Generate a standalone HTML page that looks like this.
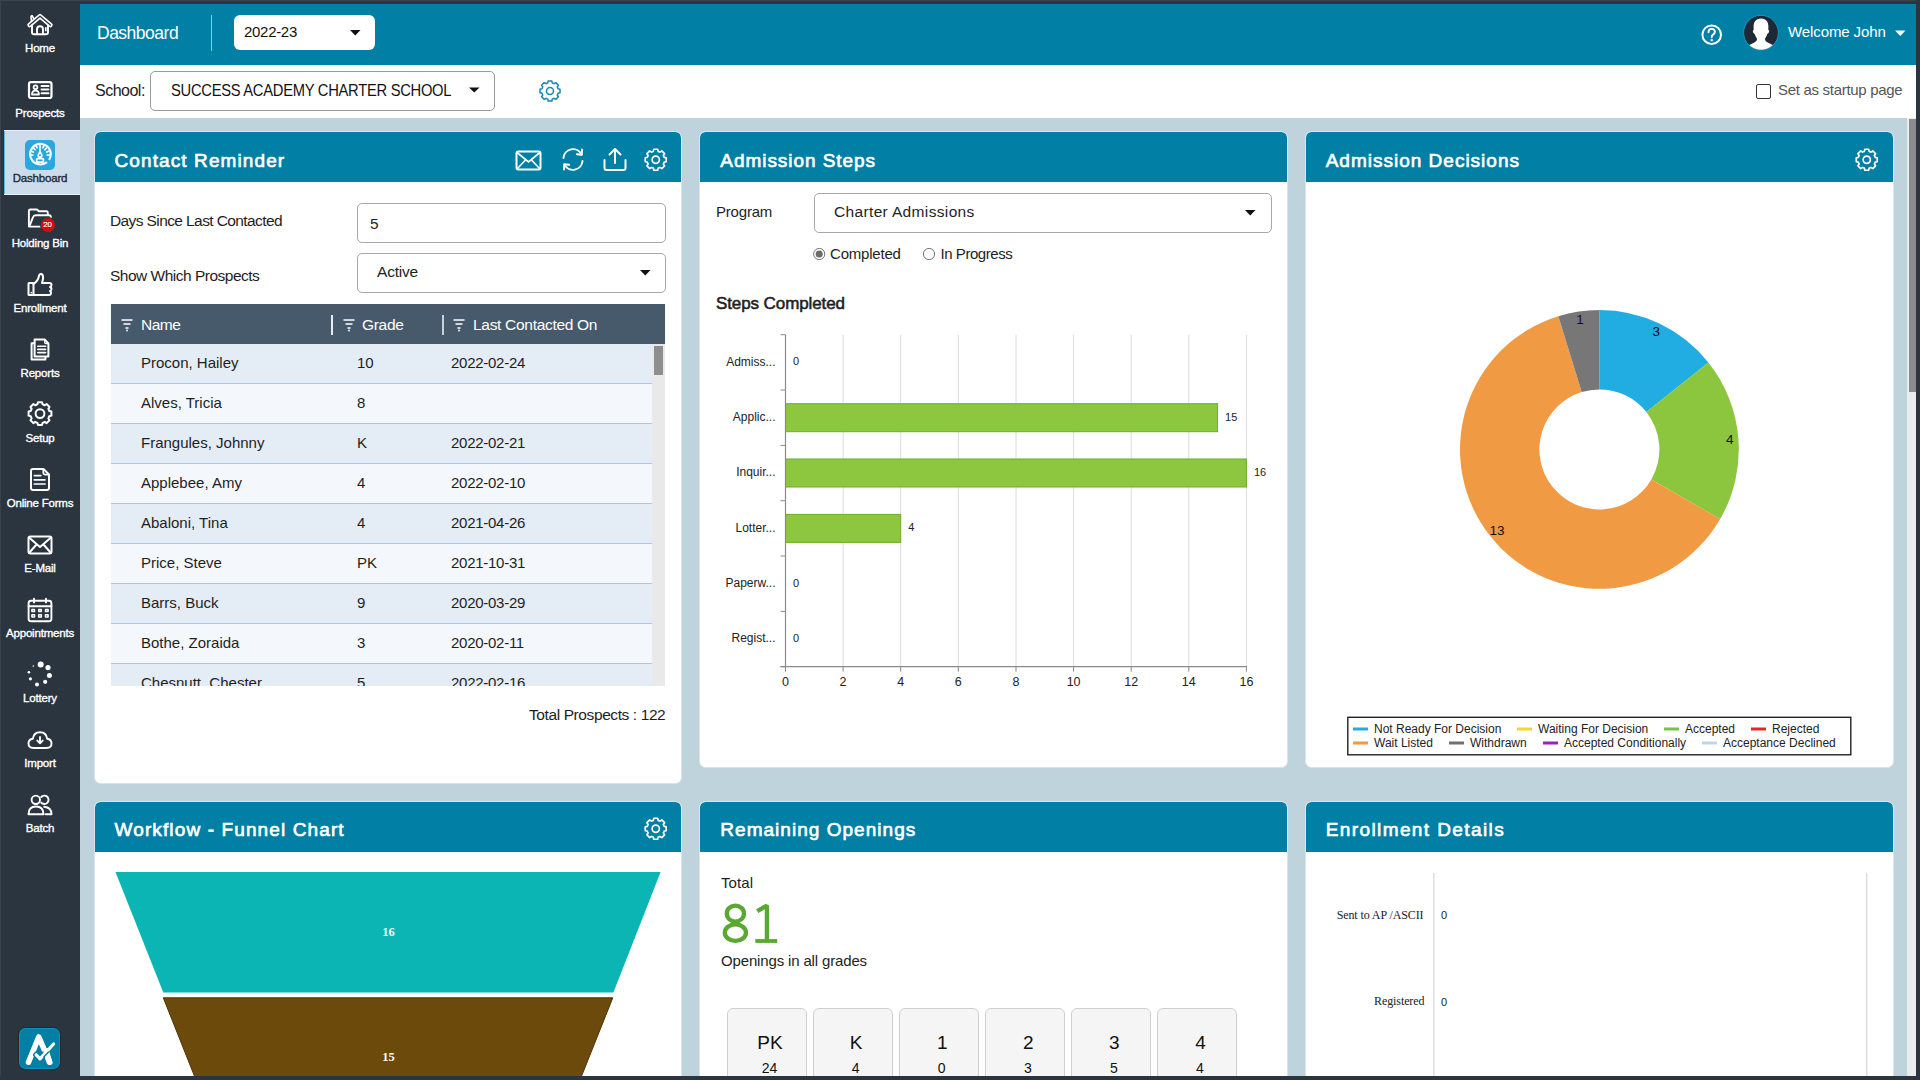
<!DOCTYPE html>
<html><head><meta charset="utf-8">
<style>
*{box-sizing:border-box;margin:0;padding:0}
html,body{width:1920px;height:1080px;overflow:hidden;background:#2a3540;font-family:"Liberation Sans",sans-serif;color:#222}
.abs{position:absolute}
#topstrip{left:0;top:0;width:1920px;height:1px;background:#3a434e}
#topbar{left:80px;top:4px;width:1836px;height:61px;background:#017fa4}
#whitebar{left:80px;top:65px;width:1836px;height:53px;background:#fff}
#content{left:80px;top:118px;width:1827px;height:958px;background:#bfd3dd}
#sbtrack{left:1907px;top:118px;width:9px;height:958px;background:#ebebeb}
#sbthumb{left:1909px;top:119px;width:7px;height:273px;background:#8c8c8c}
.panel{position:absolute;background:#fff;border-radius:6.5px;border:1.5px solid #dae4ea;overflow:hidden}
.ph{position:absolute;left:0;top:0;right:0;height:50px;background:#017fa4;border-radius:5px 5px 0 0}
.pt{position:absolute;left:20px;top:17.5px;color:#fff;font-weight:normal;-webkit-text-stroke:0.65px #fff;font-size:19px;letter-spacing:0.35px;white-space:nowrap}
.nav{position:absolute;left:0;width:80px;height:65px;color:#fff;text-align:center;font-size:11.5px;font-weight:normal;letter-spacing:-0.2px;-webkit-text-stroke:0.35px currentColor}
.nav .lbl{position:absolute;left:0;right:0;white-space:nowrap}
.nav svg{position:absolute;left:25px}
.txt{color:#1e1e1e;white-space:nowrap}
.row{position:absolute;left:0;width:554px;height:40px;border-bottom:1px solid #aac7e4;font-size:15px;color:#1e1e1e}
.row span{position:absolute;top:9.7px;white-space:nowrap}
.gbox{top:1008px;width:80px;height:90px;background:#f5f5f5;border:1.5px solid #cfcfcf;border-radius:6px}
.glbl{top:1032px;margin-left:3.5px;width:80px;text-align:center;font-size:19px;color:#111;white-space:nowrap}
.glbl,.gval{position:absolute}
.gval{top:1059.5px;margin-left:3px;width:80px;text-align:center;font-size:14px;color:#111;white-space:nowrap}
</style></head>
<body>
<div id="topstrip" class="abs"></div>
<div id="topbar" class="abs"></div>
<div id="whitebar" class="abs"></div>
<div id="content" class="abs"></div>
<div id="sbtrack" class="abs"></div>
<div id="sbthumb" class="abs"></div>



<!-- TOPBAR CONTENT -->
<div class="abs" style="left:97px;top:22.5px;color:#fff;font-size:17.5px;letter-spacing:-0.5px;white-space:nowrap">Dashboard</div>
<div class="abs" style="left:211px;top:15px;width:1px;height:36px;background:#8fc6d8"></div>
<div class="abs" style="left:234px;top:15px;width:141px;height:35px;background:#fff;border-radius:6px"></div>
<div class="abs" style="left:244px;top:23.3px;color:#111;font-size:15px;letter-spacing:-0.3px;white-space:nowrap">2022-23</div>
<svg class="abs" style="left:350px;top:30px" width="11" height="6" viewBox="0 0 11 6"><path d="M0 0 H10.5 L5.25 5.5 Z" fill="#111"/></svg>
<svg class="abs" style="left:1700px;top:23px" width="24" height="24" viewBox="0 0 24 24" fill="none" stroke="#fff" stroke-width="1.6"><circle cx="11.7" cy="11.7" r="9.3" stroke-width="2"/><path d="M8.5 9.2 Q8.5 5.9 11.7 5.9 Q14.9 5.9 14.9 8.8 Q14.9 10.6 13 11.6 Q11.7 12.3 11.7 14.2" stroke-linecap="round" stroke-width="1.9"/><rect x="10.6" y="16.2" width="2.2" height="2" fill="#fff" stroke="none"/></svg>
<svg class="abs" style="left:1742px;top:14px" width="38" height="38" viewBox="0 0 38 38"><defs><clipPath id="avc"><circle cx="19" cy="18.7" r="17"/></clipPath></defs><circle cx="19" cy="18.7" r="17.4" fill="#1f2935" stroke="#1298c8" stroke-width="1"/>
<path clip-path="url(#avc)" d="M19 4.6 C13.6 4.6 11.6 8.2 11.6 12.8 L11.7 15.8 Q10.6 16.2 11 18 Q11.5 19.6 12.7 19.9 Q13.4 22.6 14.9 24.4 L14.9 26 Q14.2 28 9.2 30 Q4 32 2 36 L2 40 H36 L36 36 Q34 32 28.8 30 Q23.8 28 23.1 26 L23.1 24.4 Q24.6 22.6 25.3 19.9 Q26.5 19.6 27 18 Q27.4 16.2 26.3 15.8 L26.4 12.8 C26.4 8.2 24.4 4.6 19 4.6 Z" fill="#fff"/></svg>
<div class="abs" style="left:1788px;top:23px;color:#fff;font-size:15px;letter-spacing:-0.1px;white-space:nowrap">Welcome John</div>
<svg class="abs" style="left:1895px;top:30px" width="11" height="7" viewBox="0 0 11 7"><path d="M0 0.5 H10.5 L5.25 6 Z" fill="#fff"/></svg>
<!-- WHITEBAR CONTENT -->
<div class="abs" style="left:95px;top:82px;color:#222;font-size:16px;letter-spacing:-0.5px;white-space:nowrap">School:</div>
<div class="abs" style="left:150px;top:71px;width:345px;height:40px;border:1px solid #9a9a9a;border-radius:5px;background:#fff"></div>
<div class="abs" style="left:171px;top:80.8px;color:#111;font-size:16.2px;letter-spacing:-0.3px;white-space:nowrap;transform:scaleX(0.91);transform-origin:0 0">SUCCESS ACADEMY CHARTER SCHOOL</div>
<svg class="abs" style="left:469px;top:87px" width="11" height="6" viewBox="0 0 11 6"><path d="M0 0.5 H10.5 L5.25 5.5 Z" fill="#111"/></svg>
<svg class="abs" style="left:538px;top:79px" width="24" height="24" viewBox="0 0 24 24" fill="none" stroke="#1a87b0" stroke-width="1.5" stroke-linejoin="round"><path d="M8.82 4.33 L9.71 4.02 L10.15 1.97 L13.85 1.97 L14.29 4.02 L15.18 4.33 L16.02 4.74 L17.78 3.60 L20.40 6.22 L19.26 7.98 L19.67 8.82 L19.98 9.71 L22.03 10.15 L22.03 13.85 L19.98 14.29 L19.67 15.18 L19.26 16.02 L20.40 17.78 L17.78 20.40 L16.02 19.26 L15.18 19.67 L14.29 19.98 L13.85 22.03 L10.15 22.03 L9.71 19.98 L8.82 19.67 L7.98 19.26 L6.22 20.40 L3.60 17.78 L4.74 16.02 L4.33 15.18 L4.02 14.29 L1.97 13.85 L1.97 10.15 L4.02 9.71 L4.33 8.82 L4.74 7.98 L3.60 6.22 L6.22 3.60 L7.98 4.74 Z"/><circle cx="12" cy="12" r="3.5"/></svg>
<div class="abs" style="left:1756px;top:84px;width:15px;height:15px;border:1.5px solid #333;border-radius:2px;background:#fff"></div>
<div class="abs" style="left:1778px;top:81px;color:#555;font-size:15px;letter-spacing:-0.3px;white-space:nowrap">Set as startup page</div>

<!-- SIDEBAR -->
<div class="abs" style="left:4px;top:130px;width:76px;height:65px;background:#cddcea"></div>
<div class="abs" style="left:4px;top:130px;width:1px;height:65px;background:#5fb5e0"></div>
<div class="abs" style="left:4px;top:130px;width:76px;height:1px;background:#e8f0f7"></div>
<div class="abs" style="left:4px;top:194px;width:76px;height:1px;background:#e8f0f7"></div>
<svg class="abs" style="left:0;top:0" width="80" height="1076" viewBox="0 0 80 1076" fill="none" stroke="#fff" stroke-width="2" stroke-linecap="round" stroke-linejoin="round">
 <!-- home 28..52, 15..35 -->
 <path d="M31.5 21.5 L31 16.8 Q31.2 15.6 32.3 15.8 L34 19.2" stroke-width="1.6"/>
 <path d="M29.6 25 L40 16.2 L50.4 25" stroke-width="4.6"/>
 <path d="M29.6 25 L40 16.2 L50.4 25" stroke="#2a3540" stroke-width="1.3"/>
 <path d="M32 25.5 V32.3 Q32 34.3 34 34.3 H46 Q48 34.3 48 32.3 V25.5" stroke-width="1.9"/>
 <path d="M37 34.3 V29.2 A3 3 0 0 1 43 29.2 V34.3" stroke-width="1.9"/>
 <path d="M45.8 27.8 V30.5" stroke-width="1.7"/>
 <!-- prospects card 28..52, 81..99 -->
 <rect x="29" y="82.2" width="22.5" height="15.8" rx="2" stroke-width="2.2"/>
 <circle cx="35.5" cy="87.2" r="1.9" stroke-width="1.8"/>
 <path d="M32 94.5 Q32 90.6 35.5 90.6 Q39 90.6 39 94.5 Z" stroke-width="1.8"/>
 <path d="M41.5 86 H48.5 M41.5 89.6 H48.5 M41.5 93.2 H48.5" stroke-width="2"/>
 <!-- holding bin folder -->
 <path d="M28.9 226.2 V211 Q28.9 209.5 30.4 209.5 H36.5 Q37.4 209.5 38 210.4 L38.6 211.3 H46.3 Q47.8 211.3 47.8 212.8 V214.8" stroke-width="1.9"/>
 <path d="M29.3 226.6 L32.9 217.3 Q33.7 215.3 35.8 215.3 H49.2 Q51 215.3 50.8 217.2 L50.4 219.5 M29.3 226.6 H41" stroke-width="1.9"/>
 <!-- enrollment thumb 27..52, 273..296 -->
 <rect x="28.5" y="283" width="5" height="12" rx="0.5"/>
 <circle cx="31.4" cy="292.6" r="0.9" fill="#fff" stroke="none"/>
 <path d="M33.5 284 Q38 281 39 276 Q39.5 273.5 41.5 274 Q43.5 275 43 279 L42 283 H49.5 Q51.5 283 51.5 285 Q51.5 286.5 50 287 Q51.5 287.5 51.5 289 Q51.5 290.5 50 291 Q51 291.5 51 293 Q51 295 49 295 H33.5"/>
 <!-- reports 29..51, 339..362 -->
 <path d="M33.5 343.3 H31.6 V359.4 H45.4 V357.4" stroke-width="2"/>
 <path d="M34.6 339.6 H44.8 L48.4 343.4 V356.4 H34.6 Z" stroke-width="2"/>
 <path d="M44.8 339.8 V342.6 Q44.8 343.6 45.8 343.6 H48.2" stroke-width="1.5"/>
 <path d="M37.8 346.3 H45.6 M37.8 349.4 H45.6 M37.8 352.6 H45.6" stroke-width="1.6"/>
 <!-- setup gear 27..52, 402..426 -->
 <!-- online forms 29..51, 468..491 -->
 <path d="M31 471 Q31 469 33 469 H43.5 L49 474.5 V488 Q49 490 47 490 H33 Q31 490 31 488 Z" stroke-width="2"/>
 <path d="M43.3 469.3 V472.5 Q43.3 474.6 45.4 474.6 H48.7" stroke-width="1.8"/>
 <path d="M34.3 475.6 H40.8 M34.3 479.8 H45 M34.3 484 H45" stroke-width="1.7"/>
 <!-- email 28..52, 536..554 -->
 <rect x="28.5" y="536.5" width="23" height="17" rx="2"/>
 <path d="M29 537.5 L40 547 L51 537.5 M29 553 L36.5 544.5 M51 553 L43.5 544.5"/>
 <!-- appointments 28..52, 599..622 -->
 <rect x="28.6" y="600.8" width="22.8" height="20.4" rx="2.5" stroke-width="1.9"/>
 <path d="M28.6 606.3 H51.4 M34 598.8 V602.6 M46 598.8 V602.6" stroke-width="1.9"/>
 <path d="M31.9 609.4 h2.6 v2.1 h-2.6 z M38.7 609.4 h2.6 v2.1 h-2.6 z M45.5 609.4 h2.6 v2.1 h-2.6 z M31.9 614.8 h2.6 v2.1 h-2.6 z M38.7 614.8 h2.6 v2.1 h-2.6 z M45.5 614.8 h2.6 v2.1 h-2.6 z" stroke-width="1.5"/>
 <!-- import cloud 27..52, 731..749 -->
 <path d="M33.5 748 Q28.5 748 28.5 743.5 Q28.5 739.3 32.8 738.8 Q33.8 732.3 40 732.3 Q46.2 732.3 47.2 738.8 Q51.5 739.3 51.5 743.5 Q51.5 748 46.5 748 Z" stroke-width="1.9"/>
 <path d="M40 737 V743.2 M37.3 740.6 L40 743.3 L42.7 740.6" stroke-width="1.9"/>
 <!-- batch 27..52, 795..815 -->
 <circle cx="35.8" cy="799.8" r="4.2" stroke-width="1.9"/>
 <path d="M41.2 797 A4.2 4.2 0 1 1 41.2 802.6" stroke-width="1.9"/>
 <path d="M28.5 814.2 Q28.5 806.5 36 806.5 Q43.5 806.5 43.5 814.2 Z" stroke-width="1.9"/>
 <path d="M44.2 806.8 Q51.5 807.5 51.5 814.2 H45.5" stroke-width="1.9"/>
</svg>
<!-- gear sidebar -->
<svg class="abs" style="left:0;top:0" width="80" height="440" viewBox="0 0 80 440" fill="none" stroke="#fff" stroke-width="2" stroke-linejoin="round"><path d="M36.33 404.73 L37.43 404.35 L37.96 402.18 L42.04 402.18 L42.57 404.35 L43.67 404.73 L44.72 405.24 L46.63 404.08 L49.52 406.97 L48.36 408.88 L48.87 409.93 L49.25 411.03 L51.42 411.56 L51.42 415.64 L49.25 416.17 L48.87 417.27 L48.36 418.32 L49.52 420.23 L46.63 423.12 L44.72 421.96 L43.67 422.47 L42.57 422.85 L42.04 425.02 L37.96 425.02 L37.43 422.85 L36.33 422.47 L35.28 421.96 L33.37 423.12 L30.48 420.23 L31.64 418.32 L31.13 417.27 L30.75 416.17 L28.58 415.64 L28.58 411.56 L30.75 411.03 L31.13 409.93 L31.64 408.88 L30.48 406.97 L33.37 404.08 L35.28 405.24 Z"/><circle cx="40" cy="413.6" r="4.4"/></svg>
<!-- dashboard active icon -->
<div class="abs" style="left:25px;top:140px;width:30px;height:30px;border-radius:5px;background:#29a8dd"></div>
<svg class="abs" style="left:25px;top:140px" width="30" height="30" viewBox="0 0 30 30" fill="none" stroke="#fff" stroke-width="1.8" stroke-linecap="round">
 <path d="M21.3 22.6 A10.3 10.3 0 1 1 24.4 19.2" stroke-width="2.1"/>
 <path d="M15 5.5 V8 M15 9.3 V10.3 M8.6 8.2 L10 9.6 M21.4 8.2 L20 9.6 M5.6 15 H7.8 M22.2 15 H24.4 M6.4 11.2 L8.3 12 M23.6 11.2 L21.7 12 M11.2 5.8 L12 7.6 M18.8 5.8 L18 7.6" stroke-width="1.7"/>
 <path d="M15 11.8 L13.2 15 Q13 17.2 15 17.2 Q17 17.2 16.8 15 Z" stroke-width="1.7"/>
 <rect x="11.6" y="18.6" width="6.8" height="3.6" rx="1" stroke-width="1.7"/>
</svg>
<!-- badge -->
<div class="abs" style="left:39.6px;top:217px;width:16px;height:16px;border-radius:50%;background:#d40c0c;border:1px solid #1d3a48;color:#fff;font-size:8px;font-weight:normal;-webkit-text-stroke:0.15px #fff;line-height:14px;text-align:center;letter-spacing:-0.2px">20</div>
<!-- lottery dots -->
<svg class="abs" style="left:26px;top:660px" width="28" height="28" viewBox="0 0 28 28" fill="#fff">
 <circle cx="14.7" cy="4.6" r="3.0"/><circle cx="22.0" cy="7.6" r="2.6"/><circle cx="23.4" cy="15.6" r="2.5"/><circle cx="19.2" cy="21.8" r="2.1"/><circle cx="11.0" cy="24.6" r="2.0"/><circle cx="4.4" cy="18.8" r="1.6"/><circle cx="2.9" cy="12.2" r="1.3"/><circle cx="7.3" cy="6.0" r="0.8"/>
</svg>
<div class="nav" style="top:0"><div class="lbl" style="top:41.7px">Home</div></div>
<div class="nav" style="top:65px"><div class="lbl" style="top:41.7px">Prospects</div></div>
<div class="nav" style="top:130px;color:#1f2a33"><div class="lbl" style="top:41.7px">Dashboard</div></div>
<div class="nav" style="top:195px"><div class="lbl" style="top:41.7px">Holding Bin</div></div>
<div class="nav" style="top:260px"><div class="lbl" style="top:41.7px">Enrollment</div></div>
<div class="nav" style="top:325px"><div class="lbl" style="top:41.7px">Reports</div></div>
<div class="nav" style="top:390px"><div class="lbl" style="top:41.7px">Setup</div></div>
<div class="nav" style="top:455px"><div class="lbl" style="top:41.7px">Online Forms</div></div>
<div class="nav" style="top:520px"><div class="lbl" style="top:41.7px">E-Mail</div></div>
<div class="nav" style="top:585px"><div class="lbl" style="top:41.7px">Appointments</div></div>
<div class="nav" style="top:650px"><div class="lbl" style="top:41.7px">Lottery</div></div>
<div class="nav" style="top:715px"><div class="lbl" style="top:41.7px">Import</div></div>
<div class="nav" style="top:780px"><div class="lbl" style="top:41.7px">Batch</div></div>
<!-- logo -->
<div class="abs" style="left:18.3px;top:1026.6px;width:42.6px;height:43.6px;border-radius:7.5px;background:#017fa4;border:1px solid #2a2227;box-shadow:inset 0 0 0 1px #0d93bd"></div>
<svg class="abs" style="left:18.3px;top:1026.6px" width="43" height="44" viewBox="0 0 43 44" fill="none" stroke-linecap="round" stroke-linejoin="round">
 <path d="M10.5 35.2 L20.8 10 L31.6 35.2" stroke="#fff" stroke-width="5.6"/>
 <path d="M18.2 27.8 L22 31.8 L35.6 17" stroke="#017fa4" stroke-width="6"/>
 <path d="M18.2 27.8 L22 31.8 L35.6 17" stroke="#fff" stroke-width="3.2"/>
 <path d="M28 23.5 L31.6 35.2" stroke="#fff" stroke-width="5.6"/>
 <path d="M30.5 25 L25.8 30" stroke="#017fa4" stroke-width="1.4"/>
</svg>

<!-- panels -->
<div class="panel" style="left:93.5px;top:131.3px;width:588.5px;height:652.6px"><div class="ph"><div class="pt" style="letter-spacing:1.1px">Contact Reminder</div></div></div>
<div class="panel" style="left:699.3px;top:131.3px;width:589px;height:636.5px"><div class="ph"><div class="pt" style="letter-spacing:0.95px">Admission Steps</div></div></div>
<div class="panel" style="left:1304.7px;top:131.3px;width:589px;height:636.5px"><div class="ph"><div class="pt" style="letter-spacing:1.0px">Admission Decisions</div></div></div>
<div class="panel" style="left:93.5px;top:801px;width:588.5px;height:400px"><div class="ph"><div class="pt" style="letter-spacing:1.12px;top:16.5px">Workflow - Funnel Chart</div></div></div>
<div class="panel" style="left:699.3px;top:801px;width:589px;height:400px"><div class="ph"><div class="pt" style="letter-spacing:1.03px;top:16.5px">Remaining Openings</div></div></div>
<div class="panel" style="left:1304.7px;top:801px;width:589px;height:400px"><div class="ph"><div class="pt" style="letter-spacing:1.4px;top:16.5px">Enrollment Details</div></div></div>


<!-- P1 BODY -->
<svg class="abs" style="left:515px;top:150px" width="27" height="21" viewBox="0 0 27 21" fill="none" stroke="#fff" stroke-width="2"><rect x="1.5" y="1.5" width="24" height="18" rx="2"/><path d="M2 2.5 L13.5 12 L25 2.5 M2 19 L10.5 10 M25 19 L16.5 10" stroke-width="1.7"/></svg>
<svg class="abs" style="left:560px;top:147px" width="26" height="25" viewBox="0 0 26 25" fill="none" stroke="#fff" stroke-width="1.9" stroke-linecap="round"><path d="M3.5 11 A9.5 9.5 0 0 1 21.5 7.5"/><path d="M22.5 14 A9.5 9.5 0 0 1 4.5 17.5"/><path d="M22 2.5 L21.8 7.8 L16.8 7.2" stroke-linejoin="round"/><path d="M4 22.5 L4.2 17.2 L9.2 17.8" stroke-linejoin="round"/></svg>
<svg class="abs" style="left:602px;top:147px" width="26" height="25" viewBox="0 0 26 25" fill="none" stroke="#fff" stroke-width="2" stroke-linecap="round" stroke-linejoin="round"><path d="M13 2 V16 M7.5 7.5 L13 2 L18.5 7.5"/><path d="M2.5 13 V21 Q2.5 23 4.5 23 H21.5 Q23.5 23 23.5 21 V13"/></svg>
<svg class="abs" style="left:643.5px;top:147.8px" width="23.5" height="23.5" viewBox="0 0 24 24" fill="none" stroke="#fff" stroke-width="1.7" stroke-linejoin="round"><path d="M8.59 3.78 L9.54 3.45 L10.02 1.28 L13.98 1.28 L14.46 3.45 L15.41 3.78 L16.31 4.21 L18.18 3.02 L20.98 5.82 L19.79 7.69 L20.22 8.59 L20.55 9.54 L22.72 10.02 L22.72 13.98 L20.55 14.46 L20.22 15.41 L19.79 16.31 L20.98 18.18 L18.18 20.98 L16.31 19.79 L15.41 20.22 L14.46 20.55 L13.98 22.72 L10.02 22.72 L9.54 20.55 L8.59 20.22 L7.69 19.79 L5.82 20.98 L3.02 18.18 L4.21 16.31 L3.78 15.41 L3.45 14.46 L1.28 13.98 L1.28 10.02 L3.45 9.54 L3.78 8.59 L4.21 7.69 L3.02 5.82 L5.82 3.02 L7.69 4.21 Z"/><circle cx="12" cy="12" r="3.7"/></svg>
<div class="abs txt" style="left:110px;top:212.3px;font-size:15.5px;letter-spacing:-0.6px">Days Since Last Contacted</div>
<div class="abs" style="left:357px;top:203px;width:309px;height:40px;border:1px solid #a8a8a8;border-radius:5px;background:#fff"></div>
<div class="abs txt" style="left:370px;top:215px;font-size:15.5px">5</div>
<div class="abs txt" style="left:110px;top:266.5px;font-size:15.5px;letter-spacing:-0.5px">Show Which Prospects</div>
<div class="abs" style="left:357px;top:253px;width:309px;height:40px;border:1px solid #a8a8a8;border-radius:5px;background:#fff"></div>
<div class="abs txt" style="left:377px;top:262.5px;font-size:15.5px;letter-spacing:-0.2px">Active</div>
<svg class="abs" style="left:640px;top:270px" width="11" height="6" viewBox="0 0 11 6"><path d="M0 0 H10.5 L5.25 5.5 Z" fill="#111"/></svg>
<div class="abs" style="left:111px;top:304px;width:554px;height:40px;background:#475a6c"></div>
<svg class="abs" style="left:121px;top:319px" width="12" height="13" viewBox="0 0 12 13"><path d="M0.5 1 H11.5 M2.5 5 H9.5 M4.5 9 H7.5" stroke="#fff" stroke-width="1.6" fill="none"/><circle cx="6" cy="11.5" r="0.9" fill="#fff"/></svg>
<svg class="abs" style="left:342.5px;top:319px" width="12" height="13" viewBox="0 0 12 13"><path d="M0.5 1 H11.5 M2.5 5 H9.5 M4.5 9 H7.5" stroke="#fff" stroke-width="1.6" fill="none"/><circle cx="6" cy="11.5" r="0.9" fill="#fff"/></svg>
<svg class="abs" style="left:453px;top:319px" width="12" height="13" viewBox="0 0 12 13"><path d="M0.5 1 H11.5 M2.5 5 H9.5 M4.5 9 H7.5" stroke="#fff" stroke-width="1.6" fill="none"/><circle cx="6" cy="11.5" r="0.9" fill="#fff"/></svg>
<div class="abs" style="left:331px;top:315px;width:2px;height:20px;background:#e8edf2"></div>
<div class="abs" style="left:442px;top:315px;width:2px;height:20px;background:#c8d0d8"></div>
<div class="abs" style="left:141px;top:315.5px;color:#fff;font-size:15.5px;letter-spacing:-0.5px;white-space:nowrap">Name</div>
<div class="abs" style="left:362px;top:315.5px;color:#fff;font-size:15.5px;letter-spacing:-0.3px;white-space:nowrap">Grade</div>
<div class="abs" style="left:473px;top:315.5px;color:#fff;font-size:15.5px;letter-spacing:-0.3px;white-space:nowrap">Last Contacted On</div>
<div class="abs" style="left:111px;top:344px;width:554px;height:342px;overflow:hidden">
<div class="row" style="top:0px;background:#e4ecf6"><span style="left:30px">Procon, Hailey</span><span style="left:246px">10</span><span style="left:340px;letter-spacing:-0.27px">2022-02-24</span></div>
<div class="row" style="top:40px;background:#f4f8fc"><span style="left:30px">Alves, Tricia</span><span style="left:246px">8</span><span style="left:340px;letter-spacing:-0.27px"></span></div>
<div class="row" style="top:80px;background:#e4ecf6"><span style="left:30px">Frangules, Johnny</span><span style="left:246px">K</span><span style="left:340px;letter-spacing:-0.27px">2022-02-21</span></div>
<div class="row" style="top:120px;background:#f4f8fc"><span style="left:30px">Applebee, Amy</span><span style="left:246px">4</span><span style="left:340px;letter-spacing:-0.27px">2022-02-10</span></div>
<div class="row" style="top:160px;background:#e4ecf6"><span style="left:30px">Abaloni, Tina</span><span style="left:246px">4</span><span style="left:340px;letter-spacing:-0.27px">2021-04-26</span></div>
<div class="row" style="top:200px;background:#f4f8fc"><span style="left:30px">Price, Steve</span><span style="left:246px">PK</span><span style="left:340px;letter-spacing:-0.27px">2021-10-31</span></div>
<div class="row" style="top:240px;background:#e4ecf6"><span style="left:30px">Barrs, Buck</span><span style="left:246px">9</span><span style="left:340px;letter-spacing:-0.27px">2020-03-29</span></div>
<div class="row" style="top:280px;background:#f4f8fc"><span style="left:30px">Bothe, Zoraida</span><span style="left:246px">3</span><span style="left:340px;letter-spacing:-0.27px">2020-02-11</span></div>
<div class="row" style="top:320px;background:#e4ecf6"><span style="left:30px">Chesnutt, Chester</span><span style="left:246px">5</span><span style="left:340px;letter-spacing:-0.27px">2022-02-16</span></div>
</div>
<div class="abs" style="left:652px;top:344px;width:13px;height:342px;background:#e9e9e9"></div>
<div class="abs" style="left:654px;top:346px;width:9px;height:29px;background:#8e8e8e"></div>
<div class="abs txt" style="left:529px;top:706px;font-size:15.5px;letter-spacing:-0.4px">Total Prospects : 122</div>


<!-- P2 BODY -->
<div class="abs txt" style="left:716px;top:202.5px;font-size:15px;letter-spacing:-0.2px">Program</div>
<div class="abs" style="left:814px;top:193px;width:458px;height:40px;border:1px solid #a8a8a8;border-radius:5px;background:#fff"></div>
<div class="abs txt" style="left:834px;top:202.5px;font-size:15.5px;letter-spacing:0.35px">Charter Admissions</div>
<svg class="abs" style="left:1245px;top:210px" width="11" height="6" viewBox="0 0 11 6"><path d="M0 0 H10.5 L5.25 5.5 Z" fill="#111"/></svg>
<svg class="abs" style="left:812px;top:247px" width="14" height="14" viewBox="0 0 14 14"><circle cx="7.2" cy="7" r="5.6" fill="#fff" stroke="#777" stroke-width="1"/><circle cx="7.2" cy="7" r="3.5" fill="#6b6b6b"/></svg>
<svg class="abs" style="left:922px;top:247px" width="14" height="14" viewBox="0 0 14 14"><circle cx="7" cy="7" r="5.6" fill="#fff" stroke="#777" stroke-width="1"/></svg>
<div class="abs txt" style="left:830px;top:245px;font-size:15px;letter-spacing:-0.2px">Completed</div>
<div class="abs txt" style="left:940.5px;top:245px;font-size:15px;letter-spacing:-0.45px">In Progress</div>
<div class="abs txt" style="left:716px;top:293.5px;font-size:17px;font-weight:normal;-webkit-text-stroke:0.55px #1e1e1e;letter-spacing:-0.1px">Steps Completed</div>
<svg class="abs" style="left:0;top:0" width="1920" height="1080" viewBox="0 0 1920 1080" font-family="Liberation Sans" fill="#222"><line x1="843.1" y1="334.7" x2="843.1" y2="666.7" stroke="#dcdcdc" stroke-width="1"/><line x1="900.7" y1="334.7" x2="900.7" y2="666.7" stroke="#dcdcdc" stroke-width="1"/><line x1="958.3" y1="334.7" x2="958.3" y2="666.7" stroke="#dcdcdc" stroke-width="1"/><line x1="1016.0" y1="334.7" x2="1016.0" y2="666.7" stroke="#dcdcdc" stroke-width="1"/><line x1="1073.6" y1="334.7" x2="1073.6" y2="666.7" stroke="#dcdcdc" stroke-width="1"/><line x1="1131.2" y1="334.7" x2="1131.2" y2="666.7" stroke="#dcdcdc" stroke-width="1"/><line x1="1188.8" y1="334.7" x2="1188.8" y2="666.7" stroke="#dcdcdc" stroke-width="1"/><line x1="1246.4" y1="334.7" x2="1246.4" y2="666.7" stroke="#dcdcdc" stroke-width="1"/><text x="775.5" y="365.5" text-anchor="end" font-size="12">Admiss...</text><text x="793.0" y="365.2" font-size="11">0</text><rect x="785.5" y="403.7" width="432.1" height="28" fill="#8dc63f" stroke="#6aae2a" stroke-width="1"/><text x="775.5" y="420.8" text-anchor="end" font-size="12">Applic...</text><text x="1225.1" y="420.5" font-size="11">15</text><rect x="785.5" y="459.0" width="460.9" height="28" fill="#8dc63f" stroke="#6aae2a" stroke-width="1"/><text x="775.5" y="476.1" text-anchor="end" font-size="12">Inquir...</text><text x="1253.9" y="475.8" font-size="11">16</text><rect x="785.5" y="514.4" width="115.2" height="28" fill="#8dc63f" stroke="#6aae2a" stroke-width="1"/><text x="775.5" y="531.5" text-anchor="end" font-size="12">Lotter...</text><text x="908.2" y="531.2" font-size="11">4</text><text x="775.5" y="586.8" text-anchor="end" font-size="12">Paperw...</text><text x="793.0" y="586.5" font-size="11">0</text><text x="775.5" y="642.1" text-anchor="end" font-size="12">Regist...</text><text x="793.0" y="641.8" font-size="11">0</text><line x1="785.5" y1="334.7" x2="785.5" y2="666.7" stroke="#8a8a8a" stroke-width="1.2"/><line x1="780.5" y1="666.7" x2="1246.9" y2="666.7" stroke="#8a8a8a" stroke-width="1.2"/><line x1="780.5" y1="334.7" x2="785.5" y2="334.7" stroke="#8a8a8a" stroke-width="1"/><line x1="780.5" y1="390.0" x2="785.5" y2="390.0" stroke="#8a8a8a" stroke-width="1"/><line x1="780.5" y1="445.4" x2="785.5" y2="445.4" stroke="#8a8a8a" stroke-width="1"/><line x1="780.5" y1="500.7" x2="785.5" y2="500.7" stroke="#8a8a8a" stroke-width="1"/><line x1="780.5" y1="556.0" x2="785.5" y2="556.0" stroke="#8a8a8a" stroke-width="1"/><line x1="780.5" y1="611.4" x2="785.5" y2="611.4" stroke="#8a8a8a" stroke-width="1"/><line x1="780.5" y1="666.7" x2="785.5" y2="666.7" stroke="#8a8a8a" stroke-width="1"/><line x1="785.5" y1="666.7" x2="785.5" y2="671.7" stroke="#8a8a8a" stroke-width="1"/><text x="785.5" y="685.5" text-anchor="middle" font-size="12.5">0</text><line x1="843.1" y1="666.7" x2="843.1" y2="671.7" stroke="#8a8a8a" stroke-width="1"/><text x="843.1" y="685.5" text-anchor="middle" font-size="12.5">2</text><line x1="900.7" y1="666.7" x2="900.7" y2="671.7" stroke="#8a8a8a" stroke-width="1"/><text x="900.7" y="685.5" text-anchor="middle" font-size="12.5">4</text><line x1="958.3" y1="666.7" x2="958.3" y2="671.7" stroke="#8a8a8a" stroke-width="1"/><text x="958.3" y="685.5" text-anchor="middle" font-size="12.5">6</text><line x1="1016.0" y1="666.7" x2="1016.0" y2="671.7" stroke="#8a8a8a" stroke-width="1"/><text x="1016.0" y="685.5" text-anchor="middle" font-size="12.5">8</text><line x1="1073.6" y1="666.7" x2="1073.6" y2="671.7" stroke="#8a8a8a" stroke-width="1"/><text x="1073.6" y="685.5" text-anchor="middle" font-size="12.5">10</text><line x1="1131.2" y1="666.7" x2="1131.2" y2="671.7" stroke="#8a8a8a" stroke-width="1"/><text x="1131.2" y="685.5" text-anchor="middle" font-size="12.5">12</text><line x1="1188.8" y1="666.7" x2="1188.8" y2="671.7" stroke="#8a8a8a" stroke-width="1"/><text x="1188.8" y="685.5" text-anchor="middle" font-size="12.5">14</text><line x1="1246.4" y1="666.7" x2="1246.4" y2="671.7" stroke="#8a8a8a" stroke-width="1"/><text x="1246.4" y="685.5" text-anchor="middle" font-size="12.5">16</text></svg>


<!-- P3 BODY -->
<svg class="abs" style="left:1854.5px;top:147.8px" width="23.5" height="23.5" viewBox="0 0 24 24" fill="none" stroke="#fff" stroke-width="1.7" stroke-linejoin="round"><path d="M8.59 3.78 L9.54 3.45 L10.02 1.28 L13.98 1.28 L14.46 3.45 L15.41 3.78 L16.31 4.21 L18.18 3.02 L20.98 5.82 L19.79 7.69 L20.22 8.59 L20.55 9.54 L22.72 10.02 L22.72 13.98 L20.55 14.46 L20.22 15.41 L19.79 16.31 L20.98 18.18 L18.18 20.98 L16.31 19.79 L15.41 20.22 L14.46 20.55 L13.98 22.72 L10.02 22.72 L9.54 20.55 L8.59 20.22 L7.69 19.79 L5.82 20.98 L3.02 18.18 L4.21 16.31 L3.78 15.41 L3.45 14.46 L1.28 13.98 L1.28 10.02 L3.45 9.54 L3.78 8.59 L4.21 7.69 L3.02 5.82 L5.82 3.02 L7.69 4.21 Z"/><circle cx="12" cy="12" r="3.7"/></svg>
<svg class="abs" style="left:0;top:0" width="1920" height="1080" viewBox="0 0 1920 1080" font-family="Liberation Sans"><path d="M1599.40 310.00 A139.4 139.4 0 0 1 1708.39 362.49 L1646.31 411.99 A60 60 0 0 0 1599.40 389.40 Z" fill="#22ade2"/><path d="M1708.39 362.49 A139.4 139.4 0 0 1 1720.12 519.10 L1651.36 479.40 A60 60 0 0 0 1646.31 411.99 Z" fill="#8cc63f"/><path d="M1720.12 519.10 A139.4 139.4 0 1 1 1558.31 316.19 L1581.71 392.07 A60 60 0 1 0 1651.36 479.40 Z" fill="#f09a43"/><path d="M1558.31 316.19 A139.4 139.4 0 0 1 1599.40 310.00 L1599.40 389.40 A60 60 0 0 0 1581.71 392.07 Z" fill="#777777"/><text x="1656.3" y="335.7" text-anchor="middle" font-size="13.5" fill="#111">3</text><text x="1729.8" y="444.40000000000003" text-anchor="middle" font-size="13.5" fill="#111">4</text><text x="1496.9" y="535.4" text-anchor="middle" font-size="13.5" fill="#111">13</text><text x="1579.9" y="324.40000000000003" text-anchor="middle" font-size="13.5" fill="#111">1</text><rect x="1347.8" y="717.3" width="503" height="37.5" fill="#fff" stroke="#222" stroke-width="1.4"/><rect x="1353" y="727.5" width="15" height="3" fill="#22ade2"/><text x="1374" y="733.3" font-size="12" fill="#222">Not Ready For Decision</text><rect x="1517" y="727.5" width="15" height="3" fill="#f4d62a"/><text x="1538" y="733.3" font-size="12" fill="#222">Waiting For Decision</text><rect x="1664" y="727.5" width="15" height="3" fill="#7cc142"/><text x="1685" y="733.3" font-size="12" fill="#222">Accepted</text><rect x="1751" y="727.5" width="15" height="3" fill="#e02a2a"/><text x="1772" y="733.3" font-size="12" fill="#222">Rejected</text><rect x="1353" y="741.5" width="15" height="3" fill="#f09a43"/><text x="1374" y="747.3" font-size="12" fill="#222">Wait Listed</text><rect x="1449" y="741.5" width="15" height="3" fill="#707070"/><text x="1470" y="747.3" font-size="12" fill="#222">Withdrawn</text><rect x="1543" y="741.5" width="15" height="3" fill="#9428b4"/><text x="1564" y="747.3" font-size="12" fill="#222">Accepted Conditionally</text><rect x="1702" y="741.5" width="15" height="3" fill="#bdd7e6"/><text x="1723" y="747.3" font-size="12" fill="#222">Acceptance Declined</text></svg>


<!-- P4 BODY -->
<svg class="abs" style="left:643.5px;top:816.8px" width="23.5" height="23.5" viewBox="0 0 24 24" fill="none" stroke="#fff" stroke-width="1.7" stroke-linejoin="round"><path d="M8.59 3.78 L9.54 3.45 L10.02 1.28 L13.98 1.28 L14.46 3.45 L15.41 3.78 L16.31 4.21 L18.18 3.02 L20.98 5.82 L19.79 7.69 L20.22 8.59 L20.55 9.54 L22.72 10.02 L22.72 13.98 L20.55 14.46 L20.22 15.41 L19.79 16.31 L20.98 18.18 L18.18 20.98 L16.31 19.79 L15.41 20.22 L14.46 20.55 L13.98 22.72 L10.02 22.72 L9.54 20.55 L8.59 20.22 L7.69 19.79 L5.82 20.98 L3.02 18.18 L4.21 16.31 L3.78 15.41 L3.45 14.46 L1.28 13.98 L1.28 10.02 L3.45 9.54 L3.78 8.59 L4.21 7.69 L3.02 5.82 L5.82 3.02 L7.69 4.21 Z"/><circle cx="12" cy="12" r="3.7"/></svg>
<svg class="abs" style="left:0;top:0" width="1920" height="1080" viewBox="0 0 1920 1080">
<polygon points="115.5,872 660.6,872 613.4,992.5 163.3,992.5" fill="#0ab5b4"/>
<polygon points="163.3,997.8 612.8,997.8 572,1100 204,1100" fill="#6b4a0b" stroke="#4f3400" stroke-width="1"/>
<text x="388.5" y="935.8" text-anchor="middle" font-family="Liberation Serif" font-weight="bold" font-size="12.5" fill="#fff">16</text>
<text x="388.5" y="1061.3" text-anchor="middle" font-family="Liberation Serif" font-weight="bold" font-size="12.5" fill="#fff">15</text>
<line x1="1433.8" y1="873" x2="1433.8" y2="1080" stroke="#dedede" stroke-width="1.5"/>
<line x1="1866.7" y1="873" x2="1866.7" y2="1080" stroke="#dedede" stroke-width="1.5"/>
<text x="1423.5" y="918.6" text-anchor="end" font-family="Liberation Serif" font-size="12" fill="#222" letter-spacing="-0.1">Sent to AP /ASCII</text>
<text x="1424.4" y="1005" text-anchor="end" font-family="Liberation Serif" font-size="12" fill="#222" letter-spacing="-0.1">Registered</text>
<text x="1441" y="919.3" font-family="Liberation Sans" font-size="11" fill="#222">0</text>
<text x="1441" y="1005.6" font-family="Liberation Sans" font-size="11" fill="#222">0</text>
</svg>
<!-- P5 BODY -->
<div class="abs txt" style="left:721px;top:873.5px;font-size:15px;letter-spacing:0.1px">Total</div>
<svg class="abs" style="left:715px;top:898px" width="70" height="50" viewBox="715 898 70 50" fill="none" stroke="#5ba733" stroke-width="4.3">
<ellipse cx="735.4" cy="913.6" rx="8.6" ry="8.0"/>
<ellipse cx="735.4" cy="932.6" rx="10.6" ry="8.3"/>
<path d="M766.9 941 V905.5 L757.2 911.2" stroke-linejoin="bevel"/>
<path d="M755.3 941 H777.2" stroke-width="3.8"/>
</svg>
<div class="abs txt" style="left:721px;top:951.5px;font-size:15px;letter-spacing:-0.15px">Openings in all grades</div>
<div class="abs gbox" style="left:726.5px"></div><div class="abs glbl" style="left:726.5px">PK</div><div class="abs gval" style="left:726.5px">24</div>
<div class="abs gbox" style="left:812.6px"></div><div class="abs glbl" style="left:812.6px">K</div><div class="abs gval" style="left:812.6px">4</div>
<div class="abs gbox" style="left:898.7px"></div><div class="abs glbl" style="left:898.7px">1</div><div class="abs gval" style="left:898.7px">0</div>
<div class="abs gbox" style="left:984.8px"></div><div class="abs glbl" style="left:984.8px">2</div><div class="abs gval" style="left:984.8px">3</div>
<div class="abs gbox" style="left:1070.9px"></div><div class="abs glbl" style="left:1070.9px">3</div><div class="abs gval" style="left:1070.9px">5</div>
<div class="abs gbox" style="left:1157.0px"></div><div class="abs glbl" style="left:1157.0px">4</div><div class="abs gval" style="left:1157.0px">4</div>


<!-- bottom frame -->
<div class="abs" style="left:0;top:0;width:1px;height:1080px;background:#38424d"></div>
<div class="abs" style="left:0;top:1079px;width:1920px;height:1px;background:#38424d"></div>
<div class="abs" style="left:0;top:1076px;width:1920px;height:4px;background:#2a3540"></div>
<div class="abs" style="left:1916px;top:0;width:4px;height:1080px;background:#2a3540"></div>
</body></html>
